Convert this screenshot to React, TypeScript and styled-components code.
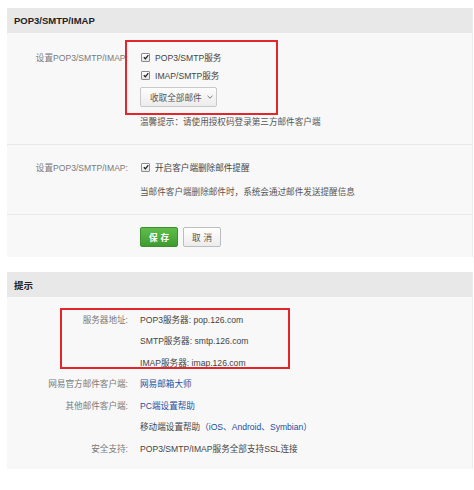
import React from 'react'
import styled, { createGlobalStyle } from 'styled-components'

const GlobalStyle = createGlobalStyle`
  html, body {
    margin: 0;
    padding: 0;
    background: #ffffff;
  }
  body {
    font-family: "Liberation Sans", "Noto Sans CJK SC", sans-serif;
    font-size: 8.6px;
    color: #444;
  }
`

const Page = styled.div`
  width: 474px;
  height: 490px;
  padding: 8px 1px 0 7px;
  box-sizing: border-box;
  display: flex;
  flex-direction: column;
  gap: 15px;
`

const Panel = styled.section`
  background: #f8f8f8;
  border-right: 1px solid #ececec;
  position: relative;
`

const PanelHeader = styled.div`
  height: 25px;
  background: #e8e8e8;
  display: flex;
  align-items: center;
  padding-left: 7px;
  font-weight: bold;
  font-size: 9.5px;
  color: #222;
`

const Section = styled.div<{ top: number; bottom: number; divider?: boolean }>`
  padding: ${(p) => p.top}px 0 ${(p) => p.bottom}px;
  border-bottom: ${(p) => (p.divider ? '1px solid #e9e9e9' : 'none')};
  display: flex;
  flex-direction: column;
  position: relative;
`

const Row = styled.div<{ h?: number; mt?: number }>`
  display: flex;
  align-items: center;
  height: ${(p) => p.h || 18}px;
  margin-top: ${(p) => p.mt || 0}px;
`

const Label = styled.div`
  width: 121px;
  text-align: right;
  color: #7a7a7a;
  flex-shrink: 0;
  margin-right: 12px;
  white-space: nowrap;
`

const Value = styled.div<{ tone?: 'link' | 'muted' }>`
  color: ${(p) => (p.tone === 'link' ? '#1f4fa0' : p.tone === 'muted' ? '#555' : '#444')};
  white-space: nowrap;
  display: flex;
  align-items: center;
`

const Link = styled.span`
  color: #1f4fa0;
`

const CheckBox = styled.span`
  display: inline-flex;
  width: 7px;
  height: 7px;
  border: 1px solid #8c8c8c;
  border-radius: 1px;
  background: linear-gradient(#ffffff, #e4e4e4);
  margin: 0 5px 0 1px;
  align-items: center;
  justify-content: center;
`

const Select = styled.div`
  height: 20px;
  width: 77px;
  box-sizing: border-box;
  border: 1px solid #c9c9c9;
  border-radius: 2px;
  background: linear-gradient(#fdfdfd, #ececec);
  display: flex;
  align-items: center;
  padding-left: 9px;
  gap: 5px;
  color: #555;
  white-space: nowrap;
`

const ButtonRow = styled.div`
  display: flex;
  gap: 5px;
  padding-left: 133px;
`

const Button = styled.div<{ primary?: boolean }>`
  width: 38px;
  height: 20px;
  box-sizing: border-box;
  border-radius: 2px;
  display: flex;
  align-items: center;
  justify-content: center;
  letter-spacing: 3px;
  text-indent: 3px;
  font-weight: ${(p) => (p.primary ? 'bold' : 'normal')};
  color: ${(p) => (p.primary ? '#ffffff' : '#555')};
  border: 1px solid ${(p) => (p.primary ? '#3c8f2c' : '#bdbdbd')};
  background: ${(p) =>
    p.primary ? 'linear-gradient(#5fbe4b, #3f9b30)' : 'linear-gradient(#ffffff, #ececec)'};
`

const Mark = styled.div<{ left: number; top: number; w: number; h: number }>`
  position: absolute;
  left: ${(p) => p.left}px;
  top: ${(p) => p.top}px;
  width: ${(p) => p.w}px;
  height: ${(p) => p.h}px;
  border: 2px solid #e3262b;
  box-sizing: border-box;
  pointer-events: none;
`

const Check = () => (
  <CheckBox>
    <svg width="6" height="6" viewBox="0 0 6 6">
      <path d="M0.8 3.2 L2.4 4.8 L5.3 1.1" fill="none" stroke="#222" strokeWidth="1.3" />
    </svg>
  </CheckBox>
)

const Chevron = () => (
  <svg width="6" height="4" viewBox="0 0 6 4">
    <path d="M0.5 0.8 L3 3.2 L5.5 0.8" fill="none" stroke="#777" strokeWidth="1" />
  </svg>
)

export default function App() {
  return (
    <>
      <GlobalStyle />
      <Page>
        <Panel>
          <PanelHeader>POP3/SMTP/IMAP</PanelHeader>
          <Section top={15} bottom={14} divider>
            <Row>
              <Label>设置POP3/SMTP/IMAP:</Label>
              <Value>
                <Check />
                POP3/SMTP服务
              </Value>
            </Row>
            <Row>
              <Label />
              <Value>
                <Check />
                IMAP/SMTP服务
              </Value>
            </Row>
            <Row h={20} mt={3}>
              <Label />
              <Select>
                收取全部邮件
                <Chevron />
              </Select>
            </Row>
            <Row mt={5}>
              <Label />
              <Value tone="muted">温馨提示：请使用授权码登录第三方邮件客户端</Value>
            </Row>
            <Mark left={118} top={7} w={153} h={75} />
          </Section>
          <Section top={13} bottom={14} divider>
            <Row>
              <Label>设置POP3/SMTP/IMAP:</Label>
              <Value>
                <Check />
                开启客户端删除邮件提醒
              </Value>
            </Row>
            <Row mt={6}>
              <Label />
              <Value tone="muted">当邮件客户端删除邮件时，系统会通过邮件发送提醒信息</Value>
            </Row>
          </Section>
          <Section top={12} bottom={10}>
            <ButtonRow>
              <Button primary>保存</Button>
              <Button>取消</Button>
            </ButtonRow>
          </Section>
        </Panel>
        <Panel>
          <PanelHeader>提示</PanelHeader>
          <Section top={11} bottom={10}>
            <Row h={21.5}>
              <Label>服务器地址:</Label>
              <Value>POP3服务器: pop.126.com</Value>
            </Row>
            <Row h={21.5}>
              <Label />
              <Value>SMTP服务器: smtp.126.com</Value>
            </Row>
            <Row h={21.5}>
              <Label />
              <Value>IMAP服务器: imap.126.com</Value>
            </Row>
            <Row h={21.5}>
              <Label>网易官方邮件客户端:</Label>
              <Value tone="link">网易邮箱大师</Value>
            </Row>
            <Row h={21.5}>
              <Label>其他邮件客户端:</Label>
              <Value tone="link">PC端设置帮助</Value>
            </Row>
            <Row h={21.5}>
              <Label />
              <Value>
                移动端设置帮助<Link>（iOS、Android、Symbian）</Link>
              </Value>
            </Row>
            <Row h={21.5}>
              <Label>安全支持:</Label>
              <Value>POP3/SMTP/IMAP服务全部支持SSL连接</Value>
            </Row>
            <Mark left={53} top={11} w={230} h={61} />
          </Section>
        </Panel>
      </Page>
    </>
  )
}
